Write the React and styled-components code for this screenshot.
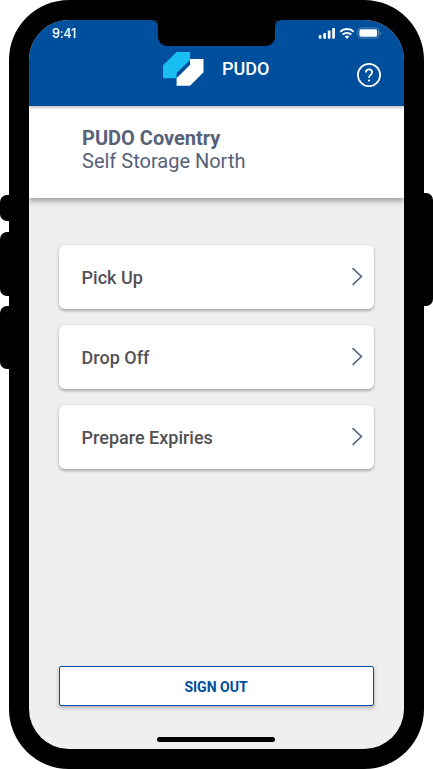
import React from "react";
import styled, { createGlobalStyle } from "styled-components";

const GlobalStyle = createGlobalStyle`
  * { box-sizing: border-box; }
  body { margin: 0; background: #fff; font-family: Roboto, sans-serif; overflow: hidden; }
  button { font-family: inherit; }
`;

const Stage = styled.div`
  position: relative;
  width: 433px;
  height: 769px;
  padding: 0 9px;
  background: #fff;
`;

const SideKey = styled.span`
  position: absolute;
  left: ${(p) => (p.$right ? "413px" : "0")};
  top: ${(p) => p.$top}px;
  width: 20px;
  height: ${(p) => p.$height}px;
  border-radius: 7px;
  background: #000;
`;

const Phone = styled.div`
  position: relative;
  width: 415px;
  height: 769px;
  padding: 20px;
  background: #000;
  border-radius: 60px;
`;

const Screen = styled.div`
  position: relative;
  display: flex;
  flex-direction: column;
  width: 375px;
  height: 729px;
  overflow: hidden;
  background: #efefef;
  border-radius: 40px;
`;

const Header = styled.header`
  position: relative;
  z-index: 2;
  flex: none;
  height: 86px;
  color: #fff;
  background: #004f9d;
  box-shadow: 0 1px 3px rgba(0, 0, 0, 0.35);
`;

const StatusBar = styled.div`
  display: flex;
  justify-content: space-between;
  height: 28px;
  padding: 6px 22px 0 23px;
`;

const Clock = styled.span`
  font: 500 12.5px/16px Inter, sans-serif;
  letter-spacing: -0.2px;
`;

const Notch = styled.div`
  position: absolute;
  left: 129px;
  top: -1px;
  width: 117px;
  height: 27px;
  background: #000;
  border-radius: 0 0 9px 9px;

  &::before, &::after {
    content: "";
    position: absolute;
    top: 1px;
    width: 7px;
    height: 7px;
  }
  &::before {
    left: -7px;
    background: radial-gradient(circle at 0 100%, transparent 6.5px, #15181c 7px);
  }
  &::after {
    right: -7px;
    background: radial-gradient(circle at 100% 100%, transparent 6.5px, #15181c 7px);
  }
`;

const TitleBar = styled.div`
  display: grid;
  grid-template-columns: 59px 1fr 24px;
  height: 58px;
  padding: 4px 23px 0 134px;
`;

const Title = styled.h1`
  margin: 6px 0 0;
  font-size: 18px;
  line-height: 21px;
  font-weight: 500;
`;

const HelpButton = styled.button`
  width: 24px;
  height: 24px;
  margin-top: 11px;
  padding: 0;
  border: 0;
  color: inherit;
  background: none;
`;

const Location = styled.section`
  position: relative;
  z-index: 1;
  flex: none;
  height: 92px;
  padding: 21px 53px 0;
  color: #576279;
  background: #fff;
  box-shadow: 0 3px 6px rgba(0, 0, 0, 0.35);
  font-size: 20px;
  line-height: 23px;
`;

const Site = styled.div`
  font-weight: ${(p) => (p.$strong ? 700 : 400)};
`;

const Menu = styled.nav`
  display: flex;
  flex-direction: column;
  gap: 16px;
  padding: 47px 30px 0;
`;

const MenuItem = styled.button`
  display: flex;
  align-items: center;
  justify-content: space-between;
  height: 64px;
  padding: 0 11px 0 22.6px;
  border: 0;
  border-radius: 6px;
  color: #535156;
  background: #fff;
  box-shadow: 0 1.5px 3px rgba(0, 0, 0, 0.3);
  font-size: 18px;
  font-weight: 500;
`;

const SignOut = styled.button`
  flex: none;
  height: 40px;
  margin: auto 30px 43px;
  padding: 2px 1px 0 0;
  border: 1px solid #004f9d;
  border-radius: 2px;
  color: #004f9d;
  background: #fff;
  box-shadow: 0 2px 4px rgba(0, 0, 0, 0.27);
  font-size: 14px;
  font-weight: 700;
`;

const HomeIndicator = styled.div`
  position: absolute;
  left: 128px;
  bottom: 7px;
  width: 118px;
  height: 5px;
  border-radius: 3px;
  background: #000;
`;

const StatusIcons = () => (
  <svg width="64" height="14" viewBox="0 0 64 14" fill="#fff">
    <rect x="0.8" y="9" width="2.6" height="3.7" rx="0.8" />
    <rect x="5.3" y="7" width="2.7" height="5.7" rx="0.8" />
    <rect x="9.8" y="4.5" width="2.7" height="8.2" rx="0.8" />
    <rect x="14.2" y="2" width="2.7" height="10.7" rx="0.8" />
    <g fill="none" stroke="#fff" strokeWidth="2">
      <path d="M22.3 5.7a9.8 9.8 0 0 1 13.4 0" />
      <path d="M24.7 8.6a6.4 6.4 0 0 1 8.6 0" />
    </g>
    <path d="M26.7 10.6a3.5 3.5 0 0 1 4.6 0L29 12.9z" />
    <rect x="39.9" y="1.9" width="20.8" height="10.2" rx="3" fill="none" stroke="#fff" strokeOpacity="0.32" />
    <rect x="41.4" y="3.3" width="17.8" height="7.4" rx="1.7" />
    <path d="M61.9 5.2v3.7c1.5-.7 1.5-3 0-3.7z" fillOpacity="0.4" />
  </svg>
);

const Logo = () => (
  <svg width="41" height="34" viewBox="0 0 41 34">
    <path d="M13.6 0H27v8L13.6 21v5.3H0V13.2z" fill="#18bdf2" />
    <path d="M27 7.1h13.5v13.2L27 33.7H13.6v-7.4L27 13z" fill="#fff" />
  </svg>
);

const HelpIcon = () => (
  <svg width="24" height="24" viewBox="0 0 24 24" fill="none" stroke="#fff">
    <circle cx="12" cy="12" r="11.1" strokeWidth="1.7" />
    <path d="M8.8 9.5c0-1.9 1.4-3.1 3.2-3.1s3.1 1.1 3.1 2.8c0 2.7-3.1 2.6-3.1 5.5" strokeWidth="1.8" />
    <circle cx="12" cy="17.5" r="1.1" fill="#fff" stroke="none" />
  </svg>
);

const Chevron = () => (
  <svg width="12" height="20" viewBox="0 0 12 20" fill="none" stroke="#56627e" strokeWidth="1.6">
    <path d="M1.6 1.1 10.4 9.5 1.6 17.9" />
  </svg>
);

const actions = ["Pick Up", "Drop Off", "Prepare Expiries"];

export default function App() {
  return (
    <>
      <GlobalStyle />
      <Stage>
        <SideKey $top={195} $height={26} />
        <SideKey $top={232} $height={64} />
        <SideKey $top={306} $height={63} />
        <SideKey $right $top={193} $height={113} />
        <Phone>
          <Screen>
            <Header>
              <StatusBar>
                <Clock>9:41</Clock>
                <StatusIcons />
              </StatusBar>
              <Notch />
              <TitleBar>
                <Logo />
                <Title>PUDO</Title>
                <HelpButton aria-label="Help"><HelpIcon /></HelpButton>
              </TitleBar>
            </Header>
            <Location>
              <Site $strong>PUDO Coventry</Site>
              <Site>Self Storage North</Site>
            </Location>
            <Menu>
              {actions.map((label) => (
                <MenuItem key={label}>
                  {label}
                  <Chevron />
                </MenuItem>
              ))}
            </Menu>
            <SignOut>SIGN OUT</SignOut>
            <HomeIndicator />
          </Screen>
        </Phone>
      </Stage>
    </>
  );
}
